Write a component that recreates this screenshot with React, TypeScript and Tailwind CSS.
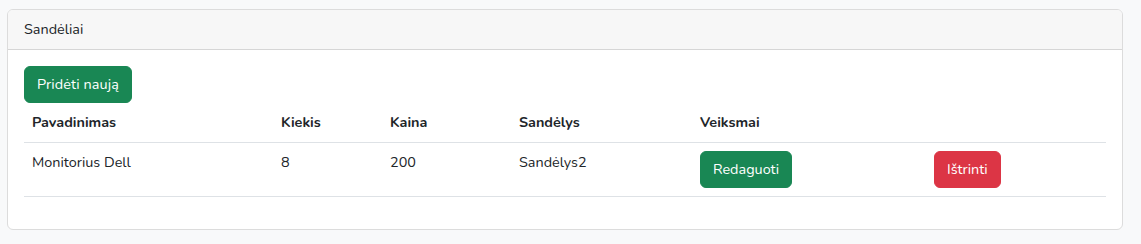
const rows = [{ name: 'Monitorius Dell', qty: 8, price: 200, warehouse: 'Sandėlys2' }];

export default function App() {
  return (
    <div className="min-h-screen bg-[#f8f9fa] px-[7px] pt-[9px] text-[14.4px] leading-[1.6] text-[#212529] [font-family:Nunito,Lato,'Noto_Sans',sans-serif]">
      <div className="w-[1116px] overflow-hidden rounded-[6px] border border-[#dcdcdc] bg-white">
        <div className="border-b border-[#d6d6d6] bg-[#f7f7f7] px-4 py-2">Sandėliai</div>
        <div className="p-4">
          <button className="rounded-[6px] border border-[#198754] bg-[#198754] px-3 py-[6px] tracking-[0.1px] text-white">
            Pridėti naują
          </button>
          <table className="mb-4 w-full table-fixed border-collapse">
            <colgroup>
              <col className="w-[249px]" />
              <col className="w-[109px]" />
              <col className="w-[129px]" />
              <col className="w-[181px]" />
              <col className="w-[234px]" />
              <col />
            </colgroup>
            <thead>
              <tr className="border-b border-[#dee2e6] text-left">
                <th className="p-2 font-bold">Pavadinimas</th>
                <th className="p-2 font-bold">Kiekis</th>
                <th className="p-2 font-bold">Kaina</th>
                <th className="p-2 font-bold">Sandėlys</th>
                <th className="p-2 font-bold">Veiksmai</th>
                <th className="p-2"></th>
              </tr>
            </thead>
            <tbody>
              {rows.map((r) => (
                <tr key={r.name} className="border-b border-[#dee2e6] align-top">
                  <td className="p-2">{r.name}</td>
                  <td className="p-2">{r.qty}</td>
                  <td className="p-2">{r.price}</td>
                  <td className="p-2">{r.warehouse}</td>
                  <td className="p-2">
                    <button className="rounded-[6px] border border-[#198754] bg-[#198754] px-3 py-[6px] text-white">Redaguoti</button>
                  </td>
                  <td className="p-2">
                    <button className="rounded-[6px] border border-[#dc3545] bg-[#dc3545] px-3 py-[6px] text-white">Ištrinti</button>
                  </td>
                </tr>
              ))}
            </tbody>
          </table>
        </div>
      </div>
    </div>
  );
}
